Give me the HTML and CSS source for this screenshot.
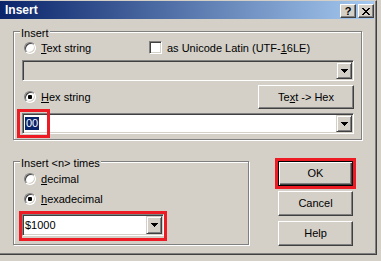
FILE: index.html
```html
<!DOCTYPE html>
<html>
<head>
<meta charset="utf-8">
<title>Insert</title>
<link rel="stylesheet" href="styles.css">
</head>
<body>
<div class="window">
  <div class="titlebar">
    <span class="title">Insert</span>
    <div class="tbtns">
      <div class="tbtn qmark">?</div>
      <div class="tbtn">
        <svg width="8" height="7" viewBox="0 0 8 7" shape-rendering="crispEdges">
          <rect x="0" y="0" width="2" height="1"/><rect x="6" y="0" width="2" height="1"/>
          <rect x="1" y="1" width="2" height="1"/><rect x="5" y="1" width="2" height="1"/>
          <rect x="2" y="2" width="4" height="1"/>
          <rect x="3" y="3" width="2" height="1"/>
          <rect x="2" y="4" width="4" height="1"/>
          <rect x="1" y="5" width="2" height="1"/><rect x="5" y="5" width="2" height="1"/>
          <rect x="0" y="6" width="2" height="1"/><rect x="6" y="6" width="2" height="1"/>
        </svg>
      </div>
    </div>
  </div>

  <div class="group g1">
    <div class="legend">Insert</div>
    <div class="row r1">
      <div class="opt opt1"><span class="radio"></span><span class="lbl"><u>T</u>ext string</span></div>
      <div class="opt"><span class="check"></span><span class="lbl">as Unicode Latin (UTF-<u>1</u>6LE)</span></div>
    </div>
    <div class="combo disabled c1">
      <div class="field"></div>
      <div class="ddbtn"><svg width="7" height="4" viewBox="0 0 7 4" shape-rendering="crispEdges"><rect x="0" y="0" width="7" height="1"/><rect x="1" y="1" width="5" height="1"/><rect x="2" y="2" width="3" height="1"/><rect x="3" y="3" width="1" height="1"/></svg></div>
    </div>
    <div class="row r3">
      <div class="opt"><span class="radio on"></span><span class="lbl"><u>H</u>ex string</span></div>
      <div class="btn txhex">Te<u>x</u>t -&gt; Hex</div>
    </div>
    <div class="combo c2">
      <div class="field"><span class="sel">00</span></div>
      <div class="ddbtn"><svg width="7" height="4" viewBox="0 0 7 4" shape-rendering="crispEdges"><rect x="0" y="0" width="7" height="1"/><rect x="1" y="1" width="5" height="1"/><rect x="2" y="2" width="3" height="1"/><rect x="3" y="3" width="1" height="1"/></svg></div>
    </div>
  </div>

  <div class="lower">
    <div class="group g2">
      <div class="legend">Insert &lt;n&gt; times</div>
      <div class="row r-dec">
        <div class="opt"><span class="radio"></span><span class="lbl"><u>d</u>ecimal</span></div>
      </div>
      <div class="row r-hex">
        <div class="opt"><span class="radio on"></span><span class="lbl"><u>h</u>exadecimal</span></div>
      </div>
      <div class="combo c3">
        <div class="field"><span class="val">$1000</span></div>
        <div class="ddbtn"><svg width="7" height="4" viewBox="0 0 7 4" shape-rendering="crispEdges"><rect x="0" y="0" width="7" height="1"/><rect x="1" y="1" width="5" height="1"/><rect x="2" y="2" width="3" height="1"/><rect x="3" y="3" width="1" height="1"/></svg></div>
      </div>
    </div>
    <div class="buttons">
      <div class="btn ok">OK</div>
      <div class="btn">Cancel</div>
      <div class="btn">Help</div>
    </div>
  </div>
</div>

<div class="mark mark-hex"></div>
<div class="mark mark-ok"></div>
<div class="mark mark-count"></div>
</body>
</html>
```

FILE: styles.css
```css
body {
  margin: 0;
  position: relative;
  width: 381px;
  height: 261px;
  overflow: hidden;
  background: #d4d0c8;
  color: #000;
  font-family: "Liberation Sans", Arial, sans-serif;
  font-size: 11px;
  line-height: 13px;
}

u { text-decoration: underline; text-underline-offset: 1px; }

.window {
  width: 377px;
  height: 255px;
  box-sizing: border-box;
  border-top: 1px solid #d4d0c8;
  border-right: 1px solid #404040;
  border-bottom: 1px solid #404040;
  box-shadow: inset -1px -1px #808080;
  background: #d4d0c8;
}

.titlebar {
  display: flex;
  align-items: flex-start;
  height: 18px;
  margin-right: 2px;
  background: linear-gradient(to right, #0a246a, #a6caf0);
}

.title {
  color: #fff;
  font-weight: bold;
  font-size: 12px;
  line-height: 18px;
  padding-left: 5px;
}

.tbtns {
  margin-left: auto;
  margin-top: 3px;
  display: flex;
  gap: 2px;
}

.tbtn {
  width: 16px;
  height: 14px;
  box-sizing: border-box;
  background: #d4d0c8;
  border: 1px solid;
  border-color: #fff #404040 #404040 #fff;
  box-shadow: inset -1px -1px #808080;
  display: flex;
  align-items: center;
  justify-content: center;
}

.qmark {
  font-weight: bold;
  font-size: 11px;
  line-height: 12px;
}

.group {
  position: relative;
  box-sizing: border-box;
  border: 1px solid #808080;
  box-shadow: inset 1px 1px #fff, 1px 1px #fff;
}

.legend {
  position: absolute;
  left: 6px;
  top: -5px;
  padding: 0 1px;
  background: #d4d0c8;
  white-space: nowrap;
}

.g1 {
  margin: 12px 0 0 13px;
  width: 349px;
  height: 109px;
  padding: 0 7px 0 8px;
}

.row {
  display: flex;
  padding-left: 2px;
}

.opt {
  display: flex;
  align-items: center;
}

.r1 {
  margin-top: 9px;
  height: 13px;
  align-items: flex-start;
}

.r1 .radio { margin-top: 1px; }
.r1 .opt { align-items: flex-start; }
.r1 .lbl { margin-top: 1px; }

.opt1 { width: 125px; }

.radio {
  position: relative;
  width: 12px;
  height: 12px;
  box-sizing: border-box;
  border-radius: 50%;
  border: 1px solid;
  border-color: #808080 #fff #fff #808080;
  box-shadow: inset 1px 1px #404040, inset -1px -1px #d4d0c8;
  background: #fff;
  flex: none;
}

.radio.on::after {
  content: "";
  position: absolute;
  left: 3px;
  top: 3px;
  width: 4px;
  height: 4px;
  border-radius: 1px;
  background: #000;
}

.check {
  width: 13px;
  height: 13px;
  box-sizing: border-box;
  border: 1px solid;
  border-color: #808080 #fff #fff #808080;
  box-shadow: inset 1px 1px #404040, inset -1px -1px #d4d0c8;
  background: #fff;
  flex: none;
}

.lbl {
  margin-left: 5px;
  white-space: nowrap;
}

.combo {
  display: flex;
  box-sizing: border-box;
  height: 21px;
  border: 1px solid;
  border-color: #808080 #fff #fff #808080;
  box-shadow: inset 1px 1px #404040, inset -1px -1px #d4d0c8;
  padding: 1px;
  background: #fff;
}

.combo.disabled { background: #d4d0c8; }

.field {
  flex: 1;
  display: flex;
  align-items: center;
  min-width: 0;
}

.ddbtn {
  width: 16px;
  flex: none;
  box-sizing: border-box;
  background: #d4d0c8;
  border: 1px solid;
  border-color: #d4d0c8 #404040 #404040 #d4d0c8;
  box-shadow: inset 1px 1px #fff, inset -1px -1px #808080;
  display: flex;
  align-items: center;
  justify-content: center;
}

.c1 { margin-top: 6px; width: 332px; }

.r3 {
  margin-top: 4px;
  height: 24px;
  align-items: center;
  justify-content: space-between;
}

.btn {
  box-sizing: border-box;
  width: 75px;
  height: 25px;
  border: 1px solid;
  border-color: #fff #404040 #404040 #fff;
  box-shadow: inset -1px -1px #808080;
  background: #d4d0c8;
  display: flex;
  align-items: center;
  justify-content: center;
  white-space: nowrap;
}

.txhex { width: 96px; height: 24px; }

.c2 { margin-top: 4px; width: 332px; }

.sel {
  align-self: flex-start;
  margin: 2px 0 0 1px;
  padding: 0 1px;
  background: #0a246a;
  color: #fff;
}

.lower {
  display: flex;
  margin-top: 21px;
}

.g2 {
  margin-left: 13px;
  width: 236px;
  height: 84px;
  padding: 0 0 0 8px;
}

.r-dec { margin-top: 11px; height: 12px; align-items: center; }
.r-hex { margin-top: 8px; height: 12px; align-items: center; }

.c3 { margin-top: 9px; width: 142px; height: 22px; }

.val { padding-left: 1px; }

.buttons {
  margin-left: 29px;
  display: flex;
  flex-direction: column;
  gap: 5px;
}

.btn.ok {
  border: 1px solid #000;
  box-shadow: inset 1px 1px #fff, inset -1px -1px #404040, inset -2px -2px #808080;
}

.mark {
  position: absolute;
  box-sizing: border-box;
  border: 3px solid #ed1c24;
}

.mark-hex { left: 17px; top: 109px; width: 33px; height: 29px; }
.mark-ok { left: 275px; top: 158px; width: 81px; height: 31px; }
.mark-count { left: 19px; top: 211px; width: 148px; height: 30px; }
```
